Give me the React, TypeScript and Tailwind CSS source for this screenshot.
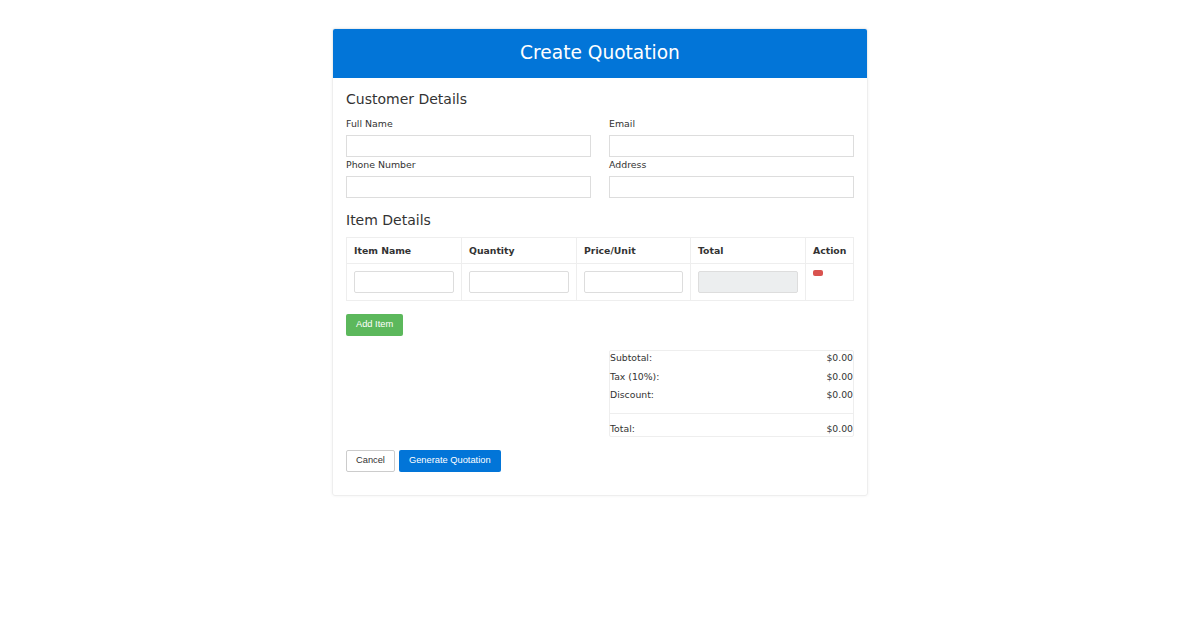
import { useState } from 'react'

// Create Quotation form — customer, items, totals

const sans = "font-['DejaVu_Sans',sans-serif]"
const btn = "font-['Liberation_Sans',Arial,sans-serif]"

function Field({ label }: { label: string }) {
    return (
        <div className="flex flex-col">
            <label className="text-[9.4px] leading-[11px] text-[#333] mb-[6px]">{label}</label>
            <input className="h-[22px] w-full border border-[#ddd] bg-white outline-none" />
        </div>
    )
}

export default function App() {
    const [rows] = useState([{ id: 1 }])

    return (
        <div className={`min-h-[630px] w-full bg-white ${sans} text-[#333]`}>
            <div className="mx-auto mt-[28px] w-[536px] border border-[#eee] rounded-[3px] shadow-[0_0_3px_rgba(0,0,0,0.06)] overflow-hidden">
                <div className="h-[49px] bg-[#0275d8] flex items-center justify-center">
                    <h1 className="text-[18.6px] leading-none text-white font-normal -mt-[1px]">Create Quotation</h1>
                </div>

                <div className="px-[13px] pt-[12px] pb-[23px]">
                    <h2 className="text-[14px] leading-[18px] mb-[10px]">Customer Details</h2>
                    <div className="grid grid-cols-2 gap-x-[18px] gap-y-[2px]">
                        <Field label="Full Name" />
                        <Field label="Email" />
                        <Field label="Phone Number" />
                        <Field label="Address" />
                    </div>

                    <h2 className="text-[14px] leading-[20px] mt-[12px] mb-[7px]">Item Details</h2>
                    <table className="w-full table-fixed border-collapse text-[9.3px]">
                        <thead>
                            <tr className="h-[26px]">
                                <th className="w-[115px] border border-[#eee] text-left font-bold px-[7px]">Item Name</th>
                                <th className="w-[115px] border border-[#eee] text-left font-bold px-[7px]">Quantity</th>
                                <th className="w-[114px] border border-[#eee] text-left font-bold px-[7px]">Price/Unit</th>
                                <th className="w-[115px] border border-[#eee] text-left font-bold px-[7px]">Total</th>
                                <th className="border border-[#eee] text-left font-bold px-[7px]">Action</th>
                            </tr>
                        </thead>
                        <tbody>
                            {rows.map((r) => (
                                <tr key={r.id} className="h-[37px]">
                                    <td className="border border-[#eee] px-[7px]">
                                        <input className="h-[22px] w-full border border-[#ddd] rounded-[2px] outline-none" />
                                    </td>
                                    <td className="border border-[#eee] px-[7px]">
                                        <input className="h-[22px] w-full border border-[#ddd] rounded-[2px] outline-none" />
                                    </td>
                                    <td className="border border-[#eee] px-[7px]">
                                        <input className="h-[22px] w-full border border-[#ddd] rounded-[2px] outline-none" />
                                    </td>
                                    <td className="border border-[#eee] px-[7px]">
                                        <input disabled className="h-[22px] w-full border border-[#ddd] rounded-[2px] bg-[#eceeef]" />
                                    </td>
                                    <td className="border border-[#eee] px-[7px] align-top pt-[6px]">
                                        <button className="block h-[6px] w-[10px] rounded-[2px] bg-[#d9534f]" />
                                    </td>
                                </tr>
                            ))}
                        </tbody>
                    </table>

                    <button className={`${btn} mt-[13px] h-[22px] px-[10px] rounded-[2px] bg-[#5cb85c] text-white text-[9.3px]`}>
                        Add Item
                    </button>

                    <div className="mt-[14px] flex justify-end">
                        <div className="w-[245px] pt-[1px] border border-[#eee] rounded-[2px] text-[9.3px] leading-[12px] text-[#333]">
                            <div className="flex justify-between h-[18.5px] items-start"><span>Subtotal:</span><span>$0.00</span></div>
                            <div className="flex justify-between h-[18.5px] items-start"><span>Tax (10%):</span><span>$0.00</span></div>
                            <div className="flex justify-between h-[18.5px] items-start"><span>Discount:</span><span>$0.00</span></div>
                            <div className="h-[5px]" />
                            <div className="flex justify-between h-[23px] items-end pb-[1px] border-t border-[#eee]"><span>Total:</span><span>$0.00</span></div>
                        </div>
                    </div>

                    <div className="mt-[13px] flex gap-[4px]">
                        <button className={`${btn} h-[22px] px-[9px] rounded-[2px] border border-[#ccc] bg-white text-[#333] text-[9.3px]`}>
                            Cancel
                        </button>
                        <button className={`${btn} h-[22px] px-[10px] rounded-[2px] bg-[#0275d8] text-white text-[9.3px]`}>
                            Generate Quotation
                        </button>
                    </div>
                </div>
            </div>
        </div>
    )
}
